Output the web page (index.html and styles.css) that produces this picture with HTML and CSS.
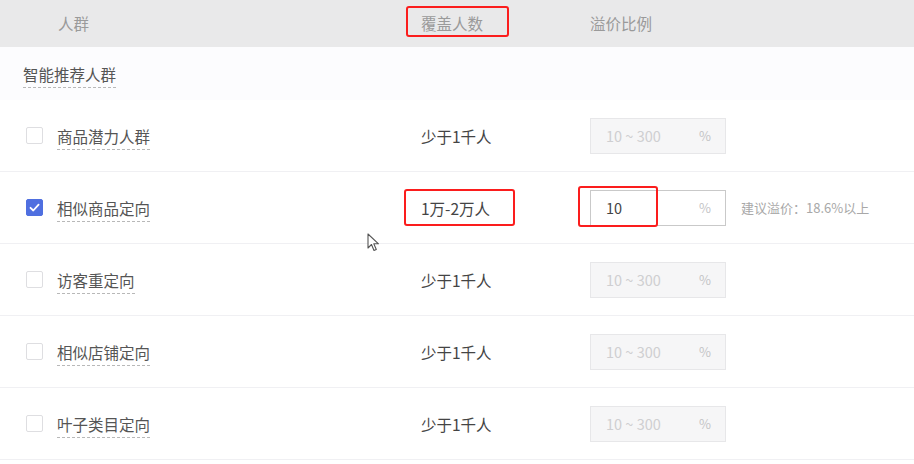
FILE: index.html
```html
<!DOCTYPE html>
<html lang="zh">
<head>
<meta charset="utf-8">
<link rel="stylesheet" href="styles.css">
</head>
<body>
<div class="table">
  <div class="head">
    <div class="c1 h1">人群</div>
    <div class="c2"><span class="mark mark-head"></span>覆盖人数</div>
    <div class="c3">溢价比例</div>
  </div>
  <div class="section"><span class="dash">智能推荐人群</span></div>

  <div class="row">
    <div class="c1"><span class="cb"></span><span class="dash">商品潜力人群</span></div>
    <div class="c2">少于1千人</div>
    <div class="c3"><div class="inp disabled"><span class="ph">10 ~ 300</span><span class="pct">%</span></div></div>
  </div>

  <div class="row">
    <div class="c1"><span class="cb on"><svg viewBox="0 0 17 17" width="17" height="17"><path d="M4.5 8.8 L7.3 11.5 L12.6 5.6" fill="none" stroke="#fff" stroke-width="1.8" stroke-linecap="round" stroke-linejoin="round"/></svg></span><span class="dash">相似商品定向</span></div>
    <div class="c2"><span class="mark mark-num"></span>1万-2万人</div>
    <div class="c3"><span class="mark mark-inp"></span><div class="inp"><span class="val">10</span><span class="pct">%</span></div><span class="tip">建议溢价：18.6%以上</span>
      <svg class="cursor" width="13" height="20" viewBox="0 0 13 20"><path d="M1 1 L1 15 L4.5 11.5 L7 17.5 L9.3 16.5 L6.8 10.8 L11.5 10.8 Z" fill="#fff" stroke="#555" stroke-width="1.1" stroke-linejoin="round"/></svg>
    </div>
  </div>

  <div class="row">
    <div class="c1"><span class="cb"></span><span class="dash">访客重定向</span></div>
    <div class="c2">少于1千人</div>
    <div class="c3"><div class="inp disabled"><span class="ph">10 ~ 300</span><span class="pct">%</span></div></div>
  </div>

  <div class="row">
    <div class="c1"><span class="cb"></span><span class="dash">相似店铺定向</span></div>
    <div class="c2">少于1千人</div>
    <div class="c3"><div class="inp disabled"><span class="ph">10 ~ 300</span><span class="pct">%</span></div></div>
  </div>

  <div class="row">
    <div class="c1"><span class="cb"></span><span class="dash">叶子类目定向</span></div>
    <div class="c2">少于1千人</div>
    <div class="c3"><div class="inp disabled"><span class="ph">10 ~ 300</span><span class="pct">%</span></div></div>
  </div>
</div>
</body>
</html>
```
FILE: styles.css
```css
html, body {
  margin: 0;
  padding: 0;
  background: #fff;
}
body {
  font-family: "Noto Sans CJK SC", "Noto Sans", sans-serif;
  font-size: 15.5px;
  color: #444;
  width: 914px;
  height: 464px;
  overflow: hidden;
}
.table {
  width: 914px;
}
.head {
  height: 47px;
  background: #e9e9ea;
  display: grid;
  grid-template-columns: 421px 169px 1fr;
  align-items: stretch;
  color: #9a9a9a;
}
.head > div {
  display: flex;
  align-items: center;
  padding-bottom: 2px;
  box-sizing: border-box;
}
.h1 {
  padding-left: 58px;
}
.c2, .c3 {
  position: relative;
  display: flex;
  align-items: center;
}
.section {
  height: 53px;
  background: #fcfcfe;
  padding-left: 23px;
  display: flex;
  align-items: center;
  color: #555;
}
.dash {
  border-bottom: 1px dashed #b8b8b8;
  line-height: 20px;
  padding-bottom: 3px;
  margin-top: 4px;
}
.row {
  height: 71px;
  border-bottom: 1px solid #f0f0f3;
  display: grid;
  grid-template-columns: 421px 169px 1fr;
  align-items: center;
}
.row .c1 {
  display: flex;
  align-items: center;
  padding-left: 26px;
  gap: 14px;
  color: #555;
}
.row .c2 {
  color: #444;
  height: 100%;
}
.row .c3 {
  height: 100%;
}
.cb {
  width: 17px;
  height: 17px;
  box-sizing: border-box;
  border: 1px solid #dedee1;
  border-radius: 2px;
  background: #fff;
  display: inline-block;
  flex: none;
}
.cb.on {
  background: #4f6fe0;
  border-color: #4f6fe0;
  position: relative;
}
.cb.on svg {
  position: absolute;
  left: -1px;
  top: -1px;
}
.inp {
  width: 136px;
  height: 36px;
  box-sizing: border-box;
  border: 1px solid #c9c9c9;
  background: #fff;
  display: flex;
  align-items: center;
  justify-content: space-between;
  padding: 0 14px 0 15px;
  font-size: 14.5px;
}
.inp.disabled {
  border-color: #e7e7e9;
  background: #f6f6f7;
}
.ph {
  color: #cfcfd1;
}
.pct {
  color: #c4c4c6;
  font-size: 13px;
}
.val {
  color: #444;
}
.tip {
  margin-left: 15px;
  font-size: 13px;
  color: #a8a8a8;
}
.mark {
  position: absolute;
  border: 2px solid #fb1d1d;
  border-radius: 3px;
  box-sizing: border-box;
  pointer-events: none;
}
.mark-head {
  left: -15px;
  top: 6px;
  width: 103px;
  height: 31px;
}
.mark-num {
  left: -17px;
  top: 17px;
  width: 111px;
  height: 37px;
}
.mark-inp {
  left: -12px;
  top: 14px;
  width: 80px;
  height: 41px;
}
.cursor {
  position: absolute;
  left: -223px;
  top: 61px;
}
```
